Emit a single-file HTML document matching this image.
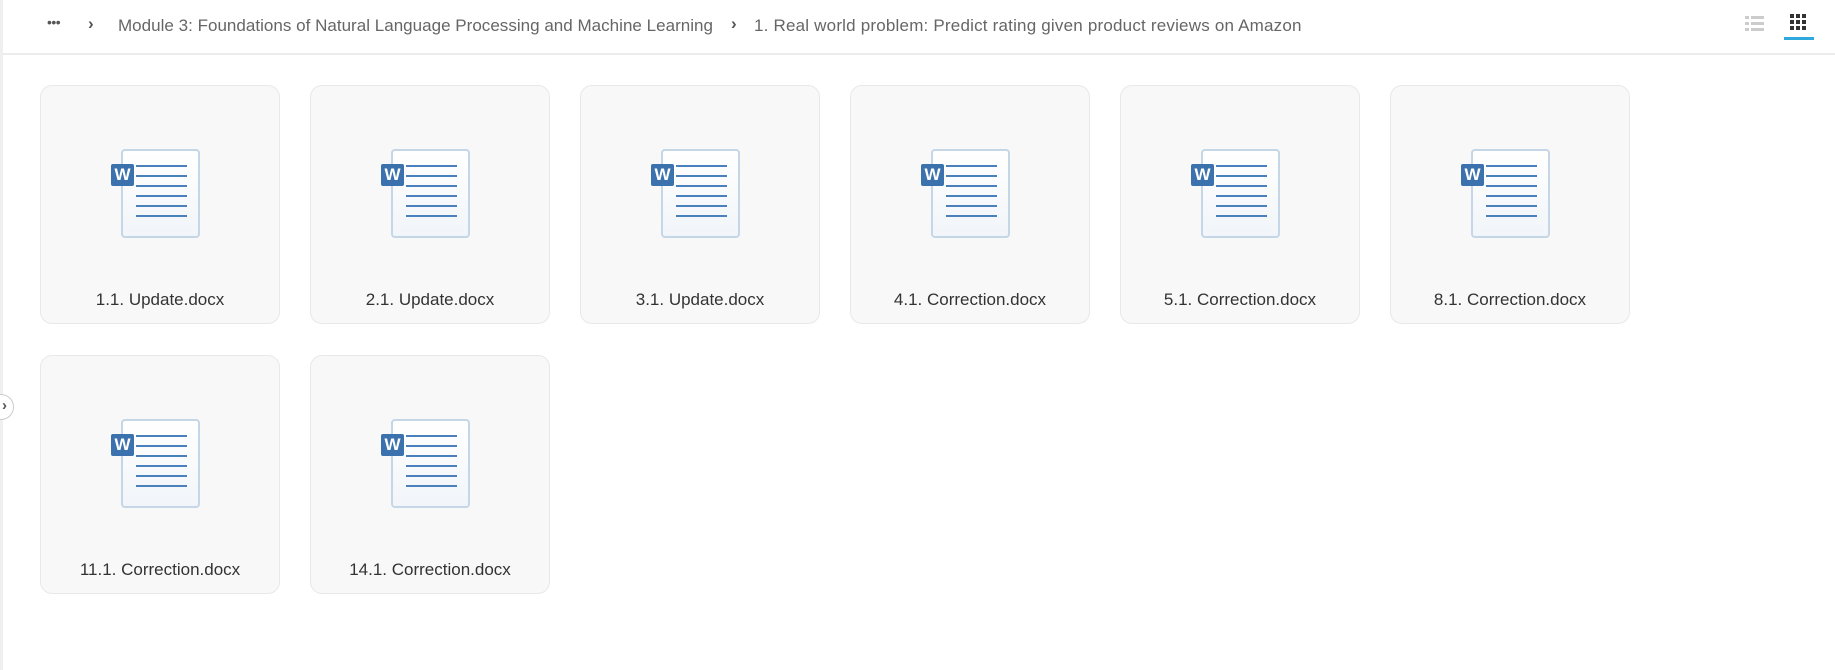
<!DOCTYPE html>
<html><head><meta charset="utf-8"><style>
*{margin:0;padding:0;box-sizing:border-box}
body{width:1835px;height:670px;background:#fff;font-family:"Liberation Sans",sans-serif;position:relative;overflow:hidden}
.sb{position:absolute;left:0;top:0;width:3px;height:670px;background:#efefef}
.hdr{position:absolute;left:3px;top:0;right:0;height:55px;border-bottom:2px solid #ececec}
.t{position:absolute;top:16px;font-size:17px;color:#666;white-space:nowrap}
.card{position:absolute;width:240px;height:239px;background:#f8f8f8;border:1px solid #e8e8e8;border-radius:12px}
.doc{position:absolute;left:80px;top:63px;width:79px;height:89px;border:2px solid #c5d6e6;border-radius:4px;background:linear-gradient(#fff,#f1f5f9)}
.badge{position:absolute;left:70px;top:78px;width:23px;height:22px;background:#3b72ad;border-radius:2px;color:#fff;font-weight:bold;font-size:17px;line-height:22px;text-align:center}
.ln{position:absolute;left:95px;width:51px;height:2px;background:#4a80bb}
.name{position:absolute;left:0;right:0;top:204px;text-align:center;font-size:17px;color:#333}
</style></head><body>
<div class="sb"></div>
<div class="hdr"></div>
<div class="t" style="left:47px;top:14px;font-size:14px;color:#555;letter-spacing:-0.5px">•••</div>
<div class="t" style="left:88px;top:14px;color:#555;font-weight:bold">›</div>
<div class="t" style="left:118px;letter-spacing:0.02px">Module 3: Foundations of Natural Language Processing and Machine Learning</div>
<div class="t" style="left:731px;top:14px;color:#555;font-weight:bold">›</div>
<div class="t" style="left:754px;letter-spacing:0.2px">1. Real world problem: Predict rating given product reviews on Amazon</div>
<svg style="position:absolute;left:1744px;top:14px" width="22" height="18"><g fill="#ccc"><rect x="1" y="2" width="4" height="3"/><rect x="7" y="2" width="13" height="3"/><rect x="1" y="8" width="4" height="3"/><rect x="7" y="8" width="13" height="3"/><rect x="1" y="14" width="4" height="3"/><rect x="7" y="14" width="13" height="3"/></g></svg>
<svg style="position:absolute;left:1789px;top:13px" width="20" height="20"><g fill="#333"><rect x="1" y="1" width="4" height="4"/><rect x="7" y="1" width="4" height="4"/><rect x="13" y="1" width="4" height="4"/><rect x="1" y="7" width="4" height="4"/><rect x="7" y="7" width="4" height="4"/><rect x="13" y="7" width="4" height="4"/><rect x="1" y="13" width="4" height="4"/><rect x="7" y="13" width="4" height="4"/><rect x="13" y="13" width="4" height="4"/></g></svg>
<div style="position:absolute;left:1784px;top:37px;width:30px;height:3px;background:#2ea8dd"></div>
<div style="position:absolute;left:-12px;top:394px;width:26px;height:26px;border-radius:50%;border:1px solid #ccc;background:#fff"></div>
<div style="position:absolute;left:2px;top:397px;font-size:15px;font-weight:bold;color:#555">›</div>

<div class="card" style="left:40px;top:85px"><div class="doc"></div><div class="badge">W</div><div class="ln" style="top:79px"></div><div class="ln" style="top:89px"></div><div class="ln" style="top:99px"></div><div class="ln" style="top:109px"></div><div class="ln" style="top:119px"></div><div class="ln" style="top:129px"></div><div class="name">1.1. Update.docx</div></div>
<div class="card" style="left:310px;top:85px"><div class="doc"></div><div class="badge">W</div><div class="ln" style="top:79px"></div><div class="ln" style="top:89px"></div><div class="ln" style="top:99px"></div><div class="ln" style="top:109px"></div><div class="ln" style="top:119px"></div><div class="ln" style="top:129px"></div><div class="name">2.1. Update.docx</div></div>
<div class="card" style="left:580px;top:85px"><div class="doc"></div><div class="badge">W</div><div class="ln" style="top:79px"></div><div class="ln" style="top:89px"></div><div class="ln" style="top:99px"></div><div class="ln" style="top:109px"></div><div class="ln" style="top:119px"></div><div class="ln" style="top:129px"></div><div class="name">3.1. Update.docx</div></div>
<div class="card" style="left:850px;top:85px"><div class="doc"></div><div class="badge">W</div><div class="ln" style="top:79px"></div><div class="ln" style="top:89px"></div><div class="ln" style="top:99px"></div><div class="ln" style="top:109px"></div><div class="ln" style="top:119px"></div><div class="ln" style="top:129px"></div><div class="name">4.1. Correction.docx</div></div>
<div class="card" style="left:1120px;top:85px"><div class="doc"></div><div class="badge">W</div><div class="ln" style="top:79px"></div><div class="ln" style="top:89px"></div><div class="ln" style="top:99px"></div><div class="ln" style="top:109px"></div><div class="ln" style="top:119px"></div><div class="ln" style="top:129px"></div><div class="name">5.1. Correction.docx</div></div>
<div class="card" style="left:1390px;top:85px"><div class="doc"></div><div class="badge">W</div><div class="ln" style="top:79px"></div><div class="ln" style="top:89px"></div><div class="ln" style="top:99px"></div><div class="ln" style="top:109px"></div><div class="ln" style="top:119px"></div><div class="ln" style="top:129px"></div><div class="name">8.1. Correction.docx</div></div>
<div class="card" style="left:40px;top:355px"><div class="doc"></div><div class="badge">W</div><div class="ln" style="top:79px"></div><div class="ln" style="top:89px"></div><div class="ln" style="top:99px"></div><div class="ln" style="top:109px"></div><div class="ln" style="top:119px"></div><div class="ln" style="top:129px"></div><div class="name">11.1. Correction.docx</div></div>
<div class="card" style="left:310px;top:355px"><div class="doc"></div><div class="badge">W</div><div class="ln" style="top:79px"></div><div class="ln" style="top:89px"></div><div class="ln" style="top:99px"></div><div class="ln" style="top:109px"></div><div class="ln" style="top:119px"></div><div class="ln" style="top:129px"></div><div class="name">14.1. Correction.docx</div></div>
</body></html>
